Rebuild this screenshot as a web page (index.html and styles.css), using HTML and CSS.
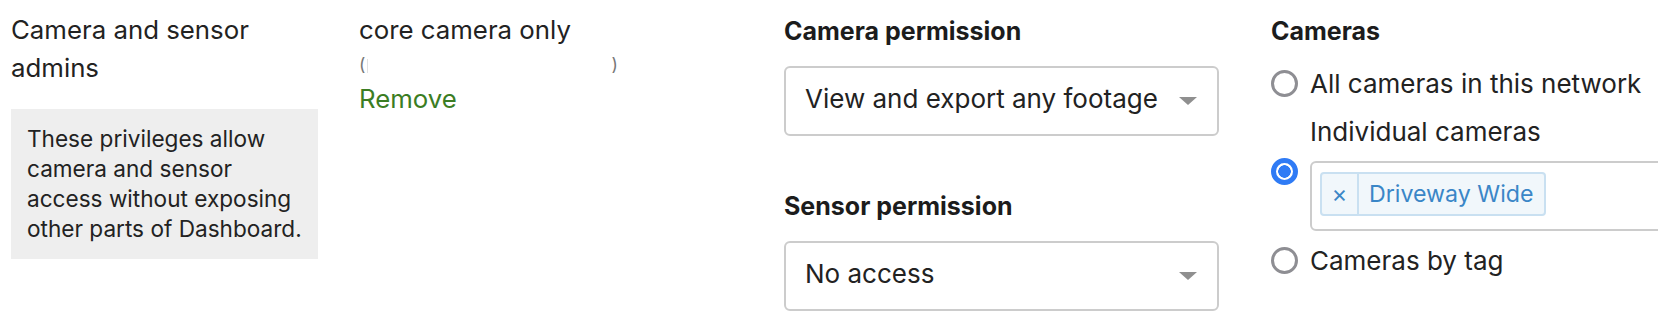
FILE: index.html
```html
<!DOCTYPE html>
<html lang="en">
<head>
<meta charset="utf-8">
<title>Camera and sensor admins</title>
<link rel="stylesheet" href="styles.css">
</head>
<body>
<div class="page">
  <div class="col col-role">
    <div class="role-title">Camera and sensor admins</div>
    <div class="role-note">These privileges allow camera and sensor access without exposing other parts of Dashboard.</div>
  </div>
  <div class="col col-user">
    <div class="user-name">core camera only</div>
    <div class="user-email">(<span class="redacted"></span>)</div>
    <a class="remove" href="#">Remove</a>
  </div>
  <div class="col col-perm">
    <div class="heading">Camera permission</div>
    <div class="select first">
      <span class="select-text">View and export any footage</span>
      <span class="caret"></span>
    </div>
    <div class="heading">Sensor permission</div>
    <div class="select">
      <span class="select-text">No access</span>
      <span class="caret"></span>
    </div>
  </div>
  <div class="col col-cams">
    <div class="heading">Cameras</div>
    <div class="options">
      <div class="option">
        <span class="radio"></span>
        <span class="option-label">All cameras in this network</span>
      </div>
      <div class="option individual">
        <span class="radio checked"></span>
        <div class="option-body">
          <span class="option-label">Individual cameras</span>
          <div class="multi">
            <span class="tag"><span class="tag-x">×</span><span class="tag-text">Driveway Wide</span></span>
          </div>
        </div>
      </div>
      <div class="option">
        <span class="radio"></span>
        <span class="option-label">Cameras by tag</span>
      </div>
    </div>
  </div>
</div>
</body>
</html>
```

FILE: styles.css
```css
html, body {
  margin: 0;
  padding: 0;
  background: #ffffff;
  overflow: hidden;
}

body {
  font-family: Inter, "Liberation Sans", sans-serif;
  color: #222222;
  width: 1658px;
  height: 328px;
}

.page {
  display: grid;
  grid-template-columns: 348px 425px 487px 1fr;
  padding: 11px 0 0 11px;
  box-sizing: border-box;
  width: 1658px;
}

.col {
  min-width: 0;
}

/* column 1 */
.role-title {
  font-size: 25.8px;
  line-height: 38px;
  width: 307px;
}

.role-note {
  margin-top: 22px;
  width: 307px;
  box-sizing: border-box;
  padding: 15px 16px;
  background: #eeeeee;
  font-size: 22.6px;
  line-height: 30px;
}

/* column 2 */
.user-name {
  font-size: 25.8px;
  line-height: 38px;
}

.user-email {
  font-size: 17.6px;
  line-height: 31px;
  color: #777777;
}

.redacted {
  display: inline-block;
  width: 243px;
  height: 14px;
  vertical-align: -2px;
  border-left: 1px solid #e2e2e2;
  margin-left: 2px;
}

.remove {
  display: block;
  font-size: 25.8px;
  line-height: 38px;
  color: #3b7d23;
  text-decoration: none;
}

/* column 3 */
.heading {
  font-size: 25px;
  font-weight: 700;
  line-height: 41px;
  color: #1c1c1c;
}

.select {
  margin-top: 14px;
  width: 435px;
  height: 70px;
  box-sizing: border-box;
  border: 2px solid #cccccc;
  border-radius: 6px;
  display: flex;
  align-items: center;
  justify-content: space-between;
  padding: 0 20px 0 19px;
}

.select.first {
  margin-bottom: 50px;
}

.select-text {
  font-size: 26px;
  line-height: 38px;
  margin-bottom: 5px;
}

.caret {
  width: 0;
  height: 0;
  border-left: 9px solid transparent;
  border-right: 9px solid transparent;
  border-top: 8px solid #8f8f8f;
}

/* column 4 */
.options {
  margin-top: 12.7px;
  display: flex;
  flex-direction: column;
}

.option {
  display: flex;
  align-items: center;
  gap: 12px;
}

.option.individual {
  margin: 10px 0 11px;
}

.option-label {
  display: block;
  font-size: 26px;
  line-height: 38px;
}

.radio {
  flex: none;
  width: 27px;
  height: 27px;
  box-sizing: border-box;
  border-radius: 50%;
  border: 3px solid #8e8e93;
  background: #ffffff;
}

.radio.checked {
  border: 5px solid #2f7bf5;
  background: radial-gradient(circle, #2f7bf5 0 6px, #ffffff 6.5px);
}

.option-body {
  display: flex;
  flex-direction: column;
  gap: 10px;
}

.multi {
  width: 420px;
  height: 70px;
  box-sizing: border-box;
  border: 2px solid #cccccc;
  border-radius: 6px;
  padding: 9px 8px 12px;
  display: flex;
  align-items: flex-start;
}

.tag {
  display: flex;
  height: 44px;
  box-sizing: border-box;
  border: 2px solid #c9e0f1;
  border-radius: 4px;
  background: #f1f7fb;
  color: #3a86c7;
}

.tag-x {
  width: 35px;
  display: flex;
  align-items: center;
  justify-content: center;
  border-right: 2px solid #c9e0f1;
  font-size: 24px;
  line-height: 40px;
}

.tag-text {
  padding: 0 10px;
  font-size: 23.2px;
  line-height: 40px;
}
```
